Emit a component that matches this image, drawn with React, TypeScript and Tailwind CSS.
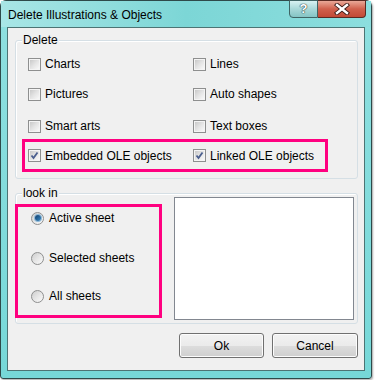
import React from "react";

function Check({ checked }: { checked?: boolean }) {
  return (
    <span className="relative flex w-[13px] h-[13px] shrink-0 border border-[#8e8f8f] bg-[#f4f4f4] p-px">
      <span className="block w-full h-full bg-gradient-to-br from-[#c9c9c9] via-[#e4e4e4] to-[#f8f8f8]" />
      {checked && (
        <svg viewBox="0 0 11 11" className="absolute left-0 top-0 w-[11px] h-[11px]">
          <path d="M2.5 5.5 L4.5 8 L8.5 2.5" fill="none" stroke="#4a5e8e" strokeWidth="1.8" />
        </svg>
      )}
    </span>
  );
}

function Radio({ on }: { on?: boolean }) {
  return (
    <span className="flex w-[13px] h-[13px] shrink-0 items-center justify-center rounded-full border border-[#8e8f8f] bg-gradient-to-br from-[#cdcdcd] via-[#e6e6e6] to-[#fbfbfb]">
      {on && <span className="block w-[6px] h-[6px] rounded-full bg-gradient-to-br from-[#0f3f6e] to-[#3a8ac4] shadow-[0_0_0_1px_#8db8d8]" />}
    </span>
  );
}

function CheckRow({ label, checked }: { label: string; checked?: boolean }) {
  return (
    <div className="flex h-[20px] items-center gap-[4px]">
      <Check checked={checked} />
      <span className="whitespace-nowrap">{label}</span>
    </div>
  );
}

function RadioRow({ label, on }: { label: string; on?: boolean }) {
  return (
    <div className="flex h-[16px] items-center gap-[5px]">
      <Radio on={on} />
      <span className="whitespace-nowrap">{label}</span>
    </div>
  );
}

export default function App() {
  return (
    <div className="w-[375px] h-[380px] bg-white font-['Liberation_Sans',Arial,sans-serif] text-[12px] text-black overflow-hidden">
      {/* Window frame */}
      <div className="w-[372px] h-[379px] flex flex-col border border-[#2e4a4a] rounded-t-[6px] rounded-b-[3px] bg-gradient-to-b from-[#8fe0e0] to-[#76d8d8] px-[6px] pb-[7px] shadow-[1px_1px_2px_rgba(0,0,0,0.35)]">
        {/* Title bar */}
        <div className="-mx-[6px] flex h-[26px] shrink-0 bg-gradient-to-r from-[#a8e6e6] via-[#7cd6d6] to-[#8cdede]">
          <div className="flex items-center pl-[7px] pt-px text-[12px] text-black">Delete Illustrations &amp; Objects</div>
          <div className="ml-auto mr-[5px] flex h-[18px] -mt-px">
            <div className="flex w-[29px] items-center justify-center rounded-bl-[4px] border border-[#3f6464] bg-gradient-to-b from-[#d8f2f2] via-[#a8d8d8] to-[#84c4c4] text-[13px] font-bold text-white [text-shadow:0_0_1px_#304848,0_0_1px_#304848,0_0_1px_#304848]">
              ?
            </div>
            <div className="flex w-[48px] items-center justify-center rounded-br-[4px] border border-l-0 border-[#5a2a22] bg-gradient-to-b from-[#e9a898] via-[#d0604c] to-[#c24a36]">
              <svg viewBox="0 0 16 12" className="w-[16px] h-[12px]">
                <path d="M3 2 L13 10 M13 2 L3 10" stroke="#3a1a16" strokeWidth="4.2" strokeLinecap="square" fill="none" />
                <path d="M3 2 L13 10 M13 2 L3 10" stroke="#ffffff" strokeWidth="2.4" strokeLinecap="square" fill="none" />
              </svg>
            </div>
          </div>
        </div>

        {/* Client area */}
        <div className="flex-1 border border-[#4c7474] bg-[#f0f0f0] pl-[7px] pt-[12px]">
          {/* Delete group */}
          <div className="relative w-[343px] h-[139px] rounded-[3px] border border-[#d5dfe5] shadow-[inset_1px_1px_0_#ffffff] pt-[13px]">
            <span className="absolute left-[6px] -top-[9px] bg-[#f0f0f0] px-px leading-[16px]">Delete</span>
            <div className="grid grid-cols-[165px_1fr] pl-[12px]">
              <CheckRow label="Charts" />
              <CheckRow label="Lines" />
            </div>
            <div className="mt-[10px] grid grid-cols-[165px_1fr] pl-[12px]">
              <CheckRow label="Pictures" />
              <CheckRow label="Auto shapes" />
            </div>
            <div className="mt-[12px] grid grid-cols-[165px_1fr] pl-[12px]">
              <CheckRow label="Smart arts" />
              <CheckRow label="Text boxes" />
            </div>
            <div className="ml-[6px] mt-[3px] flex h-[33px] w-[306px] items-center border-[3px] border-[#ff0080] pl-[3px]">
              <div className="grid grid-cols-[165px_1fr]">
                <CheckRow label="Embedded OLE objects" checked />
                <CheckRow label="Linked OLE objects" checked />
              </div>
            </div>
          </div>

          {/* look in group */}
          <div className="relative mt-[14px] flex w-[343px] h-[131px] rounded-[3px] border border-[#d5dfe5] shadow-[inset_1px_1px_0_#ffffff]">
            <span className="absolute left-[6px] -top-[9px] bg-[#f0f0f0] px-px leading-[16px]">look in</span>
            <div className="-ml-px mt-[10px] flex h-[114px] w-[147px] flex-col border-[3px] border-[#ff0080] pl-[13px] pt-[3px]">
              <RadioRow label="Active sheet" on />
              <div className="mt-[24px]">
                <RadioRow label="Selected sheets" />
              </div>
              <div className="mt-[22px]">
                <RadioRow label="All sheets" />
              </div>
            </div>
            <div className="ml-[12px] mt-[3px] h-[123px] w-[180px] border border-[#828790] bg-white" />
          </div>

          {/* Buttons */}
          <div className="mt-[9px] flex w-[343px] justify-end gap-[8px]">
            <button className="h-[25px] w-[85px] rounded-[3px] border border-[#707070] bg-[linear-gradient(#f2f2f2_0%,#ebebeb_50%,#dddddd_51%,#cfcfcf_100%)] shadow-[inset_0_0_0_1px_#fcfcfc]">
              Ok
            </button>
            <button className="h-[25px] w-[86px] rounded-[3px] border border-[#707070] bg-[linear-gradient(#f2f2f2_0%,#ebebeb_50%,#dddddd_51%,#cfcfcf_100%)] shadow-[inset_0_0_0_1px_#fcfcfc]">
              Cancel
            </button>
          </div>
        </div>
      </div>
    </div>
  );
}
